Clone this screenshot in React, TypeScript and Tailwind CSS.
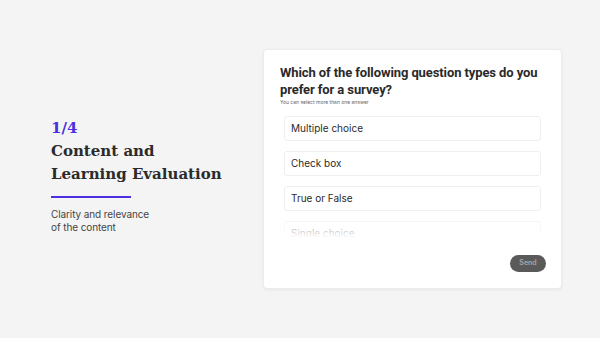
import React from "react";

const options = ["Multiple choice", "Check box", "True or False", "Single choice"];

export default function App() {
  return (
    <div className="w-[600px] h-[338px] bg-[#f4f4f4] flex items-center overflow-hidden">
      <div className="w-[263px] pl-[51px] mt-[14px]">
        <div className="text-[#4b2fe0] text-[15px] leading-[18px] font-bold" style={{ fontFamily: '"DejaVu Serif", serif' }}>
          1/4
        </div>
        <div className="text-[#2b2b2b] text-[15px] leading-[23px] font-bold mt-[3px]" style={{ fontFamily: '"DejaVu Serif", serif' }}>
          Content and
          <br />
          Learning Evaluation
        </div>
        <div className="w-[80px] h-[2px] bg-[#4b2fe0] mt-[10px]" />
        <div className="text-[#444] text-[10px] leading-[13px] mt-[10px] tracking-[-0.1px]" style={{ fontFamily: 'Inter, sans-serif' }}>
          Clarity and relevance
          <br />
          of the content
        </div>
      </div>
      <div className="w-[299px] h-[240px] bg-white rounded-[4px] border border-[#ececec] shadow-[0_1px_3px_rgba(0,0,0,0.06)] flex flex-col pt-[14px] px-[16px]" style={{ fontFamily: 'Inter, sans-serif' }}>
        <div className="text-[#2a2a2a] text-[13px] leading-[17px] font-bold tracking-[-0.1px]" style={{ fontFamily: 'Roboto, sans-serif' }}>
          Which of the following question types do you prefer for a survey?
        </div>
        <div className="text-[#666] text-[5px] leading-[7px] mt-[1px]">You can select more than one answer</div>
        <div className="relative mt-[10px] mx-[4px] h-[122px] overflow-hidden">
          <div className="flex flex-col gap-[10px]">
            {options.map((o) => (
              <div key={o} className="h-[25px] border border-[#efefef] rounded-[3px] flex items-center px-[6px] text-[10px] text-[#2a2a2a]">
                {o}
              </div>
            ))}
          </div>
          <div className="absolute left-0 right-0 bottom-0 h-[30px] bg-gradient-to-b from-white/0 to-white" />
        </div>
        <div className="flex justify-end mt-[17px] mr-[-1px]">
          <div className="w-[36px] h-[17px] rounded-full bg-[#5a5a5a] text-[#a8a8a8] text-[7px] font-semibold flex items-center justify-center">
            Send
          </div>
        </div>
      </div>
    </div>
  );
}
